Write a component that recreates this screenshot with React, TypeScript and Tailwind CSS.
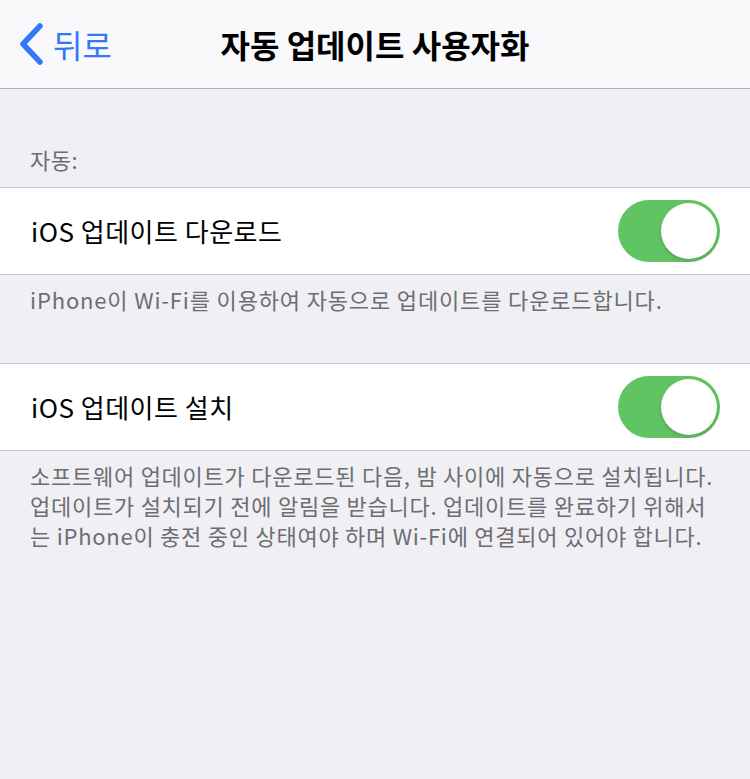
import React from "react";

const font = { fontFamily: '"Noto Sans CJK KR", "Noto Sans", sans-serif' };

function Toggle() {
  return (
    <div className="relative h-[62px] w-[102px] rounded-full bg-[#61c462]">
      <div className="absolute right-[3px] top-[3px] h-[56px] w-[56px] rounded-full bg-white shadow-[0_2px_4px_rgba(0,0,0,0.15)]" />
    </div>
  );
}

function Row({ label }: { label: string }) {
  return (
    <div className="flex h-[88px] items-center justify-between border-y border-[#c8c7cc] bg-white pl-[31px] pr-[30px]">
      <span className="text-[26px] leading-none tracking-[0.5px] text-black">{label}</span>
      <Toggle />
    </div>
  );
}

export default function App() {
  return (
    <div className="min-h-[779px] w-[750px] bg-[#efeff4]" style={font}>
      <div className="relative flex h-[89px] items-center justify-center border-b border-[#b2b2b2] bg-[#f9f9fb]">
        <div className="absolute left-[17px] top-[23px] flex items-center gap-[8px] text-[#3478f6]">
          <svg width="28" height="42" viewBox="0 0 28 42" fill="none">
            <path d="M23 3 L6 21 L23 39" stroke="#3478f6" strokeWidth="5.5" strokeLinecap="round" strokeLinejoin="round" />
          </svg>
          <span className="text-[32px] leading-none">뒤로</span>
        </div>
        <h1 className="text-[32px] font-bold leading-none text-black">자동 업데이트 사용자화</h1>
      </div>

      <div className="flex h-[98px] items-end pb-[17px] pl-[30px] text-[22px] leading-none tracking-[0.5px] text-[#6d6d72]">
        자동:
      </div>
      <Row label="iOS 업데이트 다운로드" />
      <div className="h-[88px] pl-[30px] pt-[9px] text-[22px] leading-[30px] tracking-[0.85px] text-[#6d6d72]">
        iPhone이 Wi-Fi를 이용하여 자동으로 업데이트를 다운로드합니다.
      </div>
      <Row label="iOS 업데이트 설치" />
      <div className="pl-[30px] pt-[9px] text-[22px] leading-[30px] tracking-[0.75px] text-[#6d6d72] whitespace-nowrap">
        소프트웨어 업데이트가 다운로드된 다음, 밤 사이에 자동으로 설치됩니다.
        <br />
        업데이트가 설치되기 전에 알림을 받습니다. 업데이트를 완료하기 위해서
        <br />는 iPhone이 충전 중인 상태여야 하며 Wi-Fi에 연결되어 있어야 합니다.
      </div>
    </div>
  );
}
